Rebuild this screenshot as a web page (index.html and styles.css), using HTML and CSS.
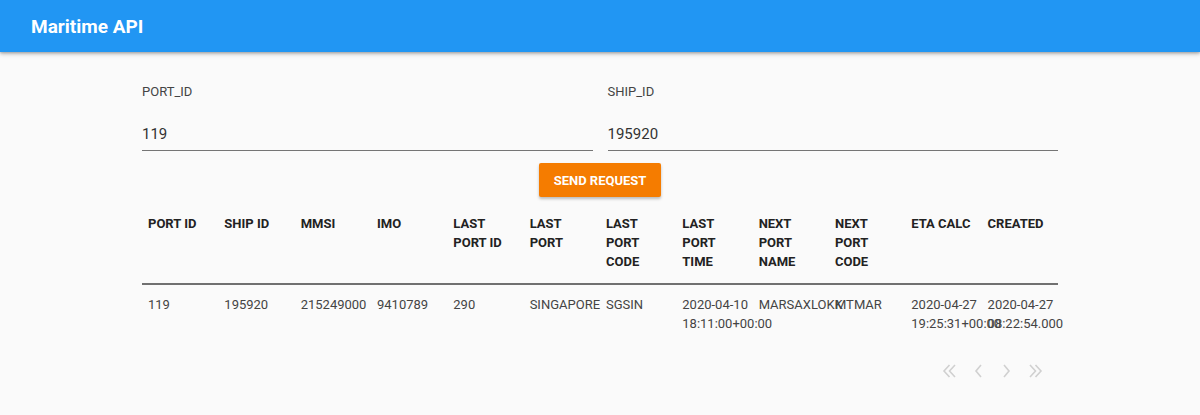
FILE: index.html
```html
<!DOCTYPE html>
<html lang="en">
<head>
<meta charset="utf-8">
<title>Maritime API</title>
<link rel="stylesheet" href="styles.css">
</head>
<body>
<header class="toolbar"><span class="title">Maritime API</span></header>
<main class="content">
  <div class="form-row">
    <label class="field">
      <span class="field-label">PORT_ID</span>
      <span class="field-input">119</span>
    </label>
    <label class="field">
      <span class="field-label">SHIP_ID</span>
      <span class="field-input">195920</span>
    </label>
  </div>
  <div class="actions"><button class="btn">SEND REQUEST</button></div>
  <div class="table-wrap">
    <table class="data">
      <thead>
        <tr>
          <th>PORT ID</th><th>SHIP ID</th><th>MMSI</th><th>IMO</th><th>LAST PORT ID</th><th>LAST PORT</th><th>LAST PORT CODE</th><th>LAST PORT TIME</th><th>NEXT PORT NAME</th><th>NEXT PORT CODE</th><th>ETA CALC</th><th>CREATED</th>
        </tr>
      </thead>
      <tbody>
        <tr>
          <td>119</td><td>195920</td><td>215249000</td><td>9410789</td><td>290</td><td>SINGAPORE</td><td>SGSIN</td>
          <td><span class="nw">2020-04-10</span> <span class="nw">18:11:00+00:00</span></td>
          <td>MARSAXLOKK</td><td>MTMAR</td>
          <td><span class="nw">2020-04-27</span> <span class="nw">19:25:31+00:00</span></td>
          <td><span class="nw">2020-04-27</span> <span class="nw">08:22:54.000Z</span></td>
        </tr>
      </tbody>
    </table>
  </div>
  <div class="pager">
    <span class="pg"><svg width="16" height="16" viewBox="0 0 16 16"><path d="M8.5 2 L3 8 L8.5 14 M14 2 L8.5 8 L14 14" fill="none" stroke="currentColor" stroke-width="1.6"/></svg></span>
    <span class="pg"><svg width="16" height="16" viewBox="0 0 16 16"><path d="M11 2 L6 8 L11 14" fill="none" stroke="currentColor" stroke-width="1.6"/></svg></span>
    <span class="pg"><svg width="16" height="16" viewBox="0 0 16 16"><path d="M5 2 L10 8 L5 14" fill="none" stroke="currentColor" stroke-width="1.6"/></svg></span>
    <span class="pg"><svg width="16" height="16" viewBox="0 0 16 16"><path d="M2 2 L7.5 8 L2 14 M7.5 2 L13 8 L7.5 14" fill="none" stroke="currentColor" stroke-width="1.6"/></svg></span>
  </div>
</main>
</body>
</html>
```
FILE: styles.css
```css
* { box-sizing: border-box; }
html, body { margin: 0; padding: 0; }
body {
  background: #fafafa;
  font-family: Roboto, "Liberation Sans", Arial, sans-serif;
  color: #333;
  width: 1200px;
  height: 415px;
  overflow: hidden;
}
.toolbar {
  height: 52px;
  background: #2196f3;
  display: flex;
  align-items: center;
  padding-left: 31px;
  box-shadow: 0 2px 4px rgba(0,0,0,0.25), 0 1px 2px rgba(0,0,0,0.15);
  position: relative;
}
.title {
  color: #fff;
  font-size: 19px;
  font-weight: 700;
}
.content {
  width: 916px;
  margin: 0 auto;
  padding-top: 32px;
}
.form-row {
  display: flex;
  gap: 15px;
}
.field {
  flex: 1;
  display: flex;
  flex-direction: column;
}
.field-label {
  font-size: 13px;
  line-height: 16px;
  color: #444;
  height: 40px;
}
.field-input {
  font-size: 15px;
  line-height: 20px;
  color: #333;
  padding-bottom: 6px;
  border-bottom: 1px solid #757575;
}
.actions {
  display: flex;
  justify-content: center;
  padding-top: 12px;
}
.btn {
  background: #f57c00;
  color: #fff;
  border: none;
  border-radius: 2px;
  height: 34px;
  padding: 0 15px;
  font-family: Roboto, "Liberation Sans", Arial, sans-serif;
  font-size: 13px;
  font-weight: 700;
  box-shadow: 0 2px 3px rgba(0,0,0,0.25);
}
.table-wrap {
  width: 921px;
  overflow: hidden;
  margin-top: 5px;
}
.data {
  width: 916px;
  table-layout: fixed;
  border-collapse: collapse;
  font-size: 13px;
  line-height: 19px;
}
.data th {
  text-align: left;
  vertical-align: top;
  font-weight: 700;
  color: #222;
  padding: 12px 6px;
  border-bottom: 2px solid #707070;
}
.data td {
  vertical-align: top;
  color: #444;
  padding: 10px 6px;
}
.nw { white-space: nowrap; }
.pager {
  display: flex;
  justify-content: flex-end;
  gap: 5px;
  padding-right: 10px;
  margin-top: 20px;
  color: #d0d0d0;
}
.pg {
  width: 24px;
  height: 16px;
  display: flex;
  justify-content: center;
}
```
